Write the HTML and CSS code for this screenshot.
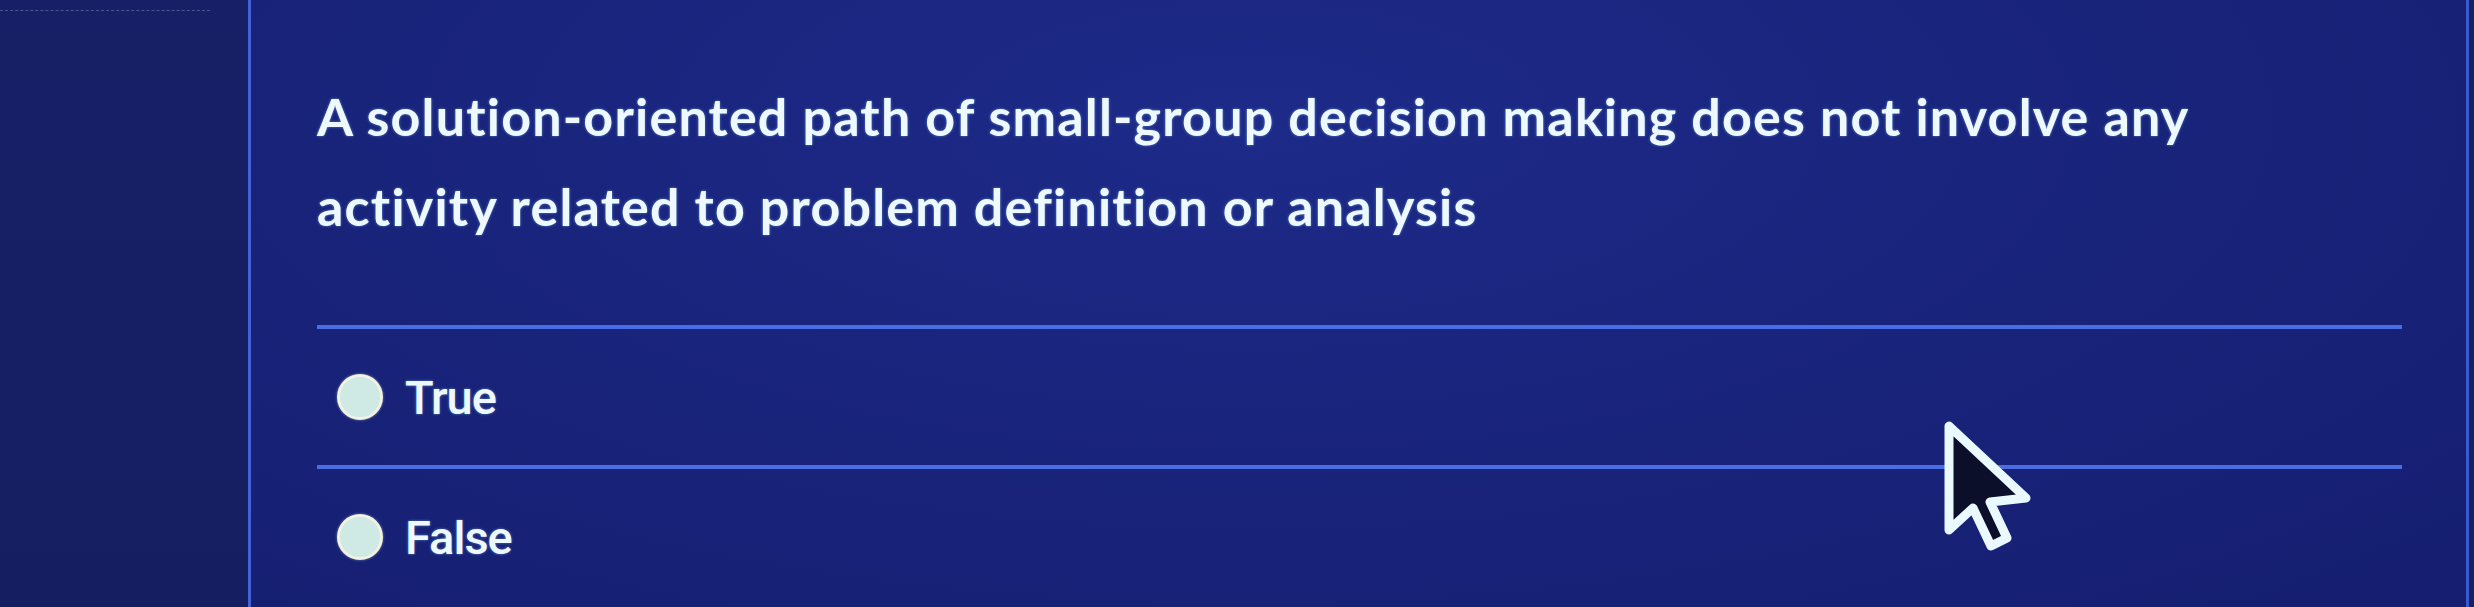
FILE: index.html
```html
<!DOCTYPE html>
<html lang="en">
<head>
<meta charset="utf-8">
<title>Question</title>
<link rel="stylesheet" href="styles.css">
</head>
<body>
<div class="screen">
  <aside class="sidebar">
    <div class="sidebar-rule"></div>
  </aside>
  <main class="content">
    <p class="question">A solution-oriented path of small-group decision making does not involve any activity related to problem definition or analysis</p>
    <ul class="options">
      <li class="option"><span class="radio"></span><span class="label">True</span></li>
      <li class="option"><span class="radio"></span><span class="label">False</span></li>
    </ul>
  </main>
  <svg class="pointer" width="96" height="136" viewBox="-8 -8 96 136">
    <path d="M0 0 L0 104 L24 82 L42 120 L58 112 L41 76 L77 72 Z" fill="#0b0f2a" stroke="#eaf8ff" stroke-width="9" stroke-linejoin="round"/>
  </svg>
</div>
</body>
</html>
```
FILE: styles.css
```css
html, body {
  margin: 0;
  padding: 0;
  height: 100%;
  background: #161e64;
  overflow: hidden;
}

.screen {
  position: relative;
  display: flex;
  height: 607px;
  width: 2474px;
  font-family: "Lato", "Open Sans", sans-serif;
}

.sidebar {
  width: 248px;
  flex: none;
  background: linear-gradient(180deg, #172066 0%, #161e62 100%);
  border-right: 3px solid #4262d8;
  padding-top: 10px;
  box-sizing: content-box;
}

.sidebar-rule {
  width: 210px;
  border-top: 1px dashed rgba(170, 185, 230, 0.35);
}

.content {
  flex: 1;
  padding: 71px 64px 0 66px;
  background: radial-gradient(ellipse at 45% 20%, #1d2a88 0%, #19247c 45%, #151e70 100%);
  border-right: 3px solid #3a5ad4;
  margin-right: 5px;
}

.question {
  margin: 0;
  max-width: 1980px;
  font-size: 52px;
  font-weight: 700;
  letter-spacing: 1.2px;
  line-height: 90px;
  color: #eef9ff;
  text-shadow: 0 0 3px rgba(140, 210, 255, 0.55);
}

.options {
  list-style: none;
  margin: 74px 0 0;
  padding: 0;
}

.option {
  display: flex;
  align-items: center;
  gap: 22px;
  height: 136px;
  padding-left: 20px;
  border-top: 4px solid #4a6ce4;
}

.radio {
  width: 40px;
  height: 40px;
  border-radius: 50%;
  background: #cfe9e4;
  border: 3px solid #f1f2e2;
  box-shadow: 0 0 3px rgba(200, 240, 230, 0.5);
}

.label {
  font-family: "Roboto", "Liberation Sans", sans-serif;
  font-size: 47px;
  font-weight: 500;
  color: #eef9ff;
  letter-spacing: -1px;
  text-shadow: 0 0 3px rgba(140, 210, 255, 0.55);
}

.pointer {
  position: absolute;
  left: 1941px;
  top: 418px;
}
```
